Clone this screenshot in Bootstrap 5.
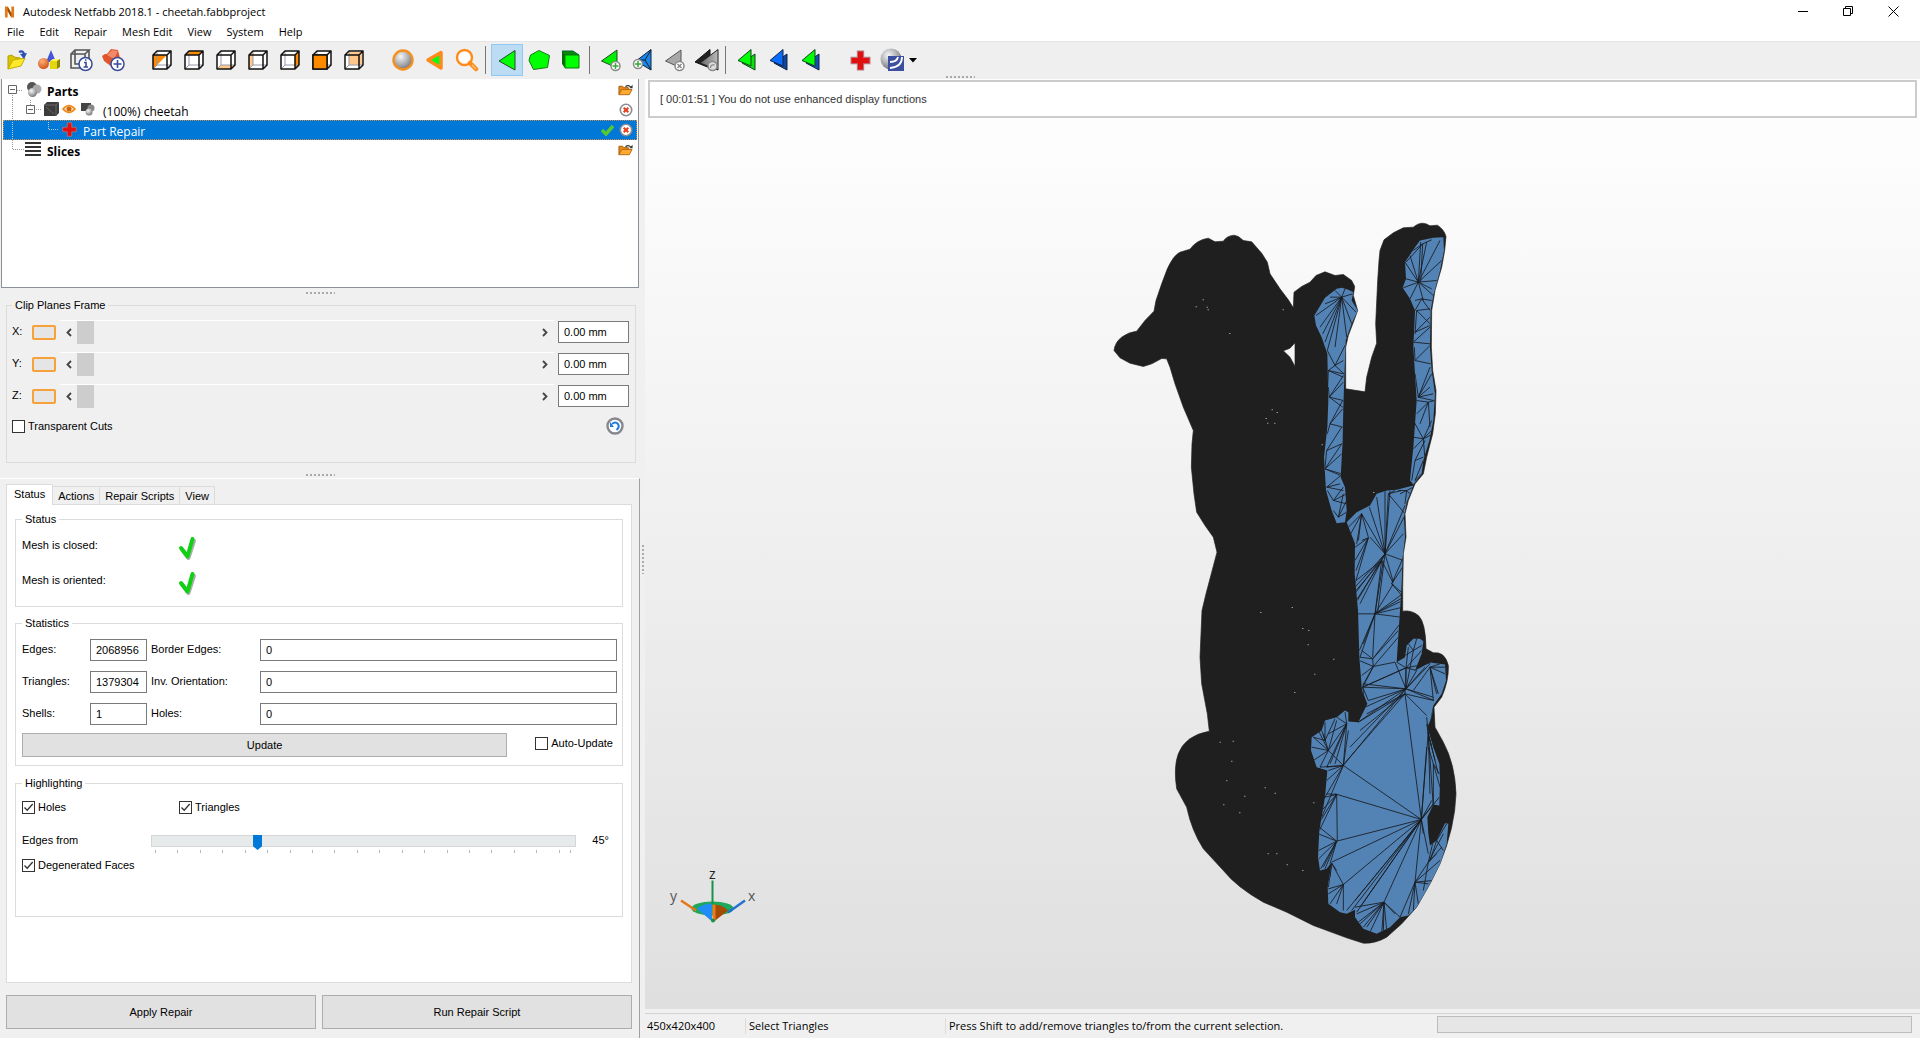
<!DOCTYPE html>
<html lang="en">
<head>
<meta charset="utf-8">
<meta name="viewport" content="width=device-width, initial-scale=1">
<title>Autodesk Netfabb 2018.1 - cheetah.fabbproject</title>
<link href="https://cdn.jsdelivr.net/npm/bootstrap@5.3.0/dist/css/bootstrap.min.css" rel="stylesheet">
<style>
  :root { --face: #f0f0f0; --line: #dcdcdc; --ui: "Open Sans", "Noto Sans", sans-serif; --form: "Liberation Sans", Arial, sans-serif; }
  body { background: var(--face); color: #000; font: 11px/16px var(--ui); min-width: 1200px; }
  button, input { font: inherit; color: inherit; border-radius: 0; }
  svg { display: block; }
  .title-bar { height: 23px; }
  .win-btn { width: 45px; height: 22px; background: none; border: 0; padding: 0; }
  .menu-bar { height: 18px; padding-left: 7px; gap: 15px; }
  .menu-bar a { color: #000; text-decoration: none; }
  .tool-bar { height: 38px; background: #efefef; border-top: 1px solid #e6e6e6; padding: 2px 0 3px 1px; }
  .tool { width: 32px; height: 32px; padding: 0; border: 1px solid transparent; background: none; }
  .tool.active { background: #bcdcf4; border-color: #90c8f6; }
  .tool-caret { width: 10px; height: 32px; padding: 0; border: 0; background: none; }
  .tool-sep { width: 1px; height: 28px; background: #777; margin: 0 5px 0 2px; }
  .gap-l { margin-left: 17px; }
  .side { padding-right: 0; }
  .tree { height: 209px; border: 1px solid #8a8f98; border-top: 0; margin: 0 1px; padding: 1px 1px 0; font-size: 12px; }
  .tree-row { height: 20px; padding-right: 4px; }
  .tree-row.sel { background: #0078d7; color: #fff; outline: 1px dotted #c98b4f; outline-offset: -1px; }
  .tree-text { padding-top: 3px; }
  .grip { height: 10px; }
  .grip-low { height: 15px; padding-bottom: 1px; }
  .form-area { font: 11px/14px var(--form); }
  fieldset { border: 1px solid var(--line); }
  fieldset > legend { float: none; width: auto; margin: 0; padding: 0 3px; font-size: 11px; line-height: 14px; }
  .clip-box { margin: 0 4px 0 6px; height: 165px; padding: 4px 6px 0 5px; }
  .clip-row { height: 32px; }
  .clip-row label { width: 20px; padding-bottom: 2px; }
  .swatch-btn { width: 24px; height: 15px; border: 2px solid #f7a13a; border-radius: 2px; background: #e5e5e5; padding: 0; }
  .scroll-arrow { width: 17px; height: 24px; border: 0; background: none; padding: 0; }
  .scroll-strip { border-top: 1px solid #fff; margin: 0 4px; height: 25px; }
  .field { height: 22px; border: 1px solid #7a7a7a; background: #fff; padding: 0 5px; min-width: 0; }
  .field-mm { width: 71px; }
  .field-num { width: 57px; }
  input[type=range] { appearance: none; -webkit-appearance: none; background: transparent; margin: 0; display: block; min-width: 0; }
  .scroll-range { height: 23px; }
  .scroll-range::-webkit-slider-thumb { -webkit-appearance: none; width: 17px; height: 23px; background: #cdcdcd; }
  .edge-range { height: 16px; width: 100%; }
  .edge-range::-webkit-slider-runnable-track { height: 12px; background: #e7eaea; border: 1px solid #d6d6d6; }
  .edge-range::-webkit-slider-thumb { -webkit-appearance: none; width: 9px; height: 15px; margin-top: -1px; background: #0078d7; clip-path: polygon(0 0,100% 0,100% 75%,50% 100%,0 75%); }
  .tick-box { appearance: none; -webkit-appearance: none; width: 13px; height: 13px; border: 1px solid #333; background: #fff; margin: 0; flex: none; }
  .tick-box:checked { background: #fff url("data:image/svg+xml,%3Csvg xmlns='http://www.w3.org/2000/svg' viewBox='0 0 11 11'%3E%3Cpath d='M1.5 5.5 4.2 8.3 9.7 2' fill='none' stroke='%23333' stroke-width='1.3'/%3E%3C/svg%3E"); }
  .tick-box + label { padding-left: 3px; }
  .lower { border-top: 1px solid #fff; border-right: 1px solid #a0a0a0; padding: 5px 7px 9px 6px; }
  .tabs { height: 20px; padding-left: 0; align-items: flex-end; }
  .tabs button { height: 18px; padding: 0 5px; border: 1px solid var(--line); border-left: 0; border-bottom: 0; background: var(--face); }
  .tabs button.active { height: 21px; padding: 0 7px 3px; border-left: 1px solid var(--line); background: #fff; margin-bottom: -1px; position: relative; }
  .tab-page { background: #fff; border: 1px solid var(--line); padding: 7px 8px; }
  .status-set { height: 95px; padding: 2px 6px; }
  .status-row { height: 35px; }
  .status-row span { width: 156px; padding-bottom: 2px; }
  .status-row svg { margin-top: 4px; }
  .stat-set { height: 150px; padding: 4px 5px 0 6px; margin-top: 9px; }
  .stat-row { height: 32px; }
  .stat-row label { padding-bottom: 3px; }
  .lab-a { width: 68px; }
  .lab-b { width: 113px; padding-left: 4px; }
  .push { background: #e1e1e1; border: 1px solid #adadad; }
  .update-row { padding-top: 3px; }
  .auto-box { margin-left: 28px; padding-bottom: 4px; }
  .push-update { height: 24px; }
  .high-set { height: 141px; padding: 10px 5px 0 6px; margin-top: 10px; }
  .high-left { width: 157px; }
  .lab-c { width: 130px; }
  .edge-row { padding-top: 19px; }
  .ticks { height: 4px; margin: 1px 4px 0; }
  .push-big { height: 34px; }
  .big-row { padding-top: 12px; gap: 6px; }
  .split { width: 5px; }
  .view { background: linear-gradient(#fff, #dfdfdf); min-height: 0; }
  .msg { height: 38px; margin: 1px 3px 0; border: 2px solid #ccc; background: #fff; padding: 0 10px; font: 11px/14px var(--form); color: #333; }
  .canvas { min-height: 0; }
  .status-bar { height: 25px; border-top: 1px solid #d4d4d4; }
  .status-bar .cell { border-left: 1px solid #dcdcdc; padding-left: 3px; }
  .cell-size { width: 100px; padding-left: 2px; }
  .cell-mode { width: 200px; }
  .work { height: 17px; width: 475px; border: 1px solid #bcbcbc; background: #e6e6e6; margin-bottom: 3px; }
</style>
</head>
<body class="d-flex flex-column vh-100 overflow-hidden">

<svg width="0" height="0" class="position-absolute" aria-hidden="true">
  <defs>
    <symbol id="cube" viewBox="0 0 20 20"><g fill="none"><path d="M5 1V15H19M5 15 1 19" stroke="#99a" stroke-width="1"/><path d="M1 5H15V19H1ZM1 5 5 1H19V15L15 19M15 5 19 1" stroke="#111" stroke-width="1.5" stroke-linejoin="round"/></g></symbol>
    <symbol id="folder" viewBox="0 0 16 12"><path d="M1 11V2h4l1 1.500h5V6" fill="#e78a1c" stroke="#a45a08"/><path d="M1 11 4 5.500h11L12 11Z" fill="#ffab32" stroke="#b5660d"/><path d="M8 2.500q3-2.500 5.500.500" fill="none" stroke="#333" stroke-width="1.300"/><path d="M12 4h3.500V.5Z" fill="#333"/></symbol>
    <symbol id="del" viewBox="0 0 14 14"><circle cx="7" cy="7" r="5.700" fill="#fff" stroke="#8b8b94" stroke-width="1.600"/><path d="m4.700 4.700 4.600 4.600m0-4.600-4.600 4.600" stroke="#e2401c" stroke-width="2"/></symbol>
    <symbol id="tick" viewBox="0 0 20 26"><path d="M4.500 15 10.500 23 16 6" fill="none" stroke="#777" stroke-opacity=".6" stroke-width="4" stroke-linejoin="round" stroke-linecap="round"/><path d="M3 13 9.500 21.500 14.500 4" fill="none" stroke="#0fd012" stroke-width="4" stroke-linecap="round" stroke-linejoin="round"/></symbol>
    <symbol id="cross" viewBox="0 0 20 20"><path d="M7 1h6v6h6v6h-6v6H7v-6H1V7h6Z" fill="#e01010" stroke="#b9757a" stroke-width="1"/></symbol>
    <symbol id="dots" viewBox="0 0 30 4"><path d="M1 2h29" stroke="#aaa" stroke-width="2" stroke-dasharray="2 2"/></symbol>
    <radialGradient id="ball" cx=".38" cy=".32" r=".75"><stop offset="0" stop-color="#f6f6f6"/><stop offset=".6" stop-color="#a4a6aa"/><stop offset="1" stop-color="#66686c"/></radialGradient>
    <radialGradient id="oball" cx=".38" cy=".3" r=".8"><stop offset="0" stop-color="#ffb27a"/><stop offset="1" stop-color="#c9480c"/></radialGradient>
    <linearGradient id="gside" x2="1"><stop offset="0" stop-color="#666"/><stop offset="1" stop-color="#bbb"/></linearGradient>
  </defs>
</svg>

<header class="bg-white">
  <div class="title-bar d-flex align-items-center">
    <svg class="ms-1 me-2" width="11" height="14" viewBox="0 0 12 14"><path d="M1 13V1h3l4 7V1h3v12H8L4 6v7Z" fill="#e07b1c"/><path d="m4 1 4 7v5L4 6Z" fill="#9c4a0b"/></svg>
    <span class="flex-grow-1">Autodesk Netfabb 2018.1 - cheetah.fabbproject</span>
    <button class="win-btn" aria-label="Minimize"><svg class="mx-auto" width="11" height="11"><path d="M0 5.500h10" stroke="#000"/></svg></button>
    <button class="win-btn" aria-label="Restore"><svg class="mx-auto" width="11" height="11"><path d="M.5 2.500h7v7h-7ZM2.500 2.500v-2h7v7h-2" fill="none" stroke="#000"/></svg></button>
    <button class="win-btn me-1" aria-label="Close"><svg class="mx-auto" width="11" height="11"><path d="m.5.5 10 10m0-10-10 10" stroke="#000"/></svg></button>
  </div>
  <nav class="menu-bar d-flex align-items-center">
    <a href="#">File</a><a href="#">Edit</a><a href="#">Repair</a><a href="#">Mesh Edit</a><a href="#">View</a><a href="#">System</a><a href="#">Help</a>
  </nav>
</header>

<div class="tool-bar d-flex align-items-center position-relative" role="toolbar">
  <button class="tool" aria-label="Open"><svg class="mx-auto" width="22" height="22" viewBox="0 0 22 22"><path d="M2 20V7l4-1 2 2 6 1v3" fill="#d9c400" stroke="#b59f00"/><path d="m2 20 5-9 12-2-4 8Z" fill="#ffe92e" stroke="#c4ad00"/><path d="M13 3q4-2 5 2" fill="none" stroke="#2b50b5" stroke-width="2.400"/><path d="m14 5 7-1-3 6Z" fill="#2b50b5"/></svg></button>
  <button class="tool" aria-label="Add part"><svg class="mx-auto" width="24" height="22" viewBox="0 0 24 22"><path d="m14 1 5 12H9Z" fill="#4456d8"/><circle cx="6.500" cy="14.500" r="5.500" fill="url(#oball)"/><path d="M13 12h7v8h-7Z" fill="#e3d60a"/><path d="m13 12 3-2h7l-3 2Z" fill="#fff45c"/><path d="m20 12 3-2v8l-3 2Z" fill="#8d8400"/></svg></button>
  <button class="tool" aria-label="Part info"><svg class="mx-auto" width="24" height="24" viewBox="0 0 24 24"><path d="M2 6 6 2h14l-4 4v14H2ZM2 6h14M6 2v14h10M20 2v9" fill="none" stroke="#555" stroke-width="1.600"/><circle cx="16.500" cy="16" r="6.500" fill="#fff" stroke="#3a4c98" stroke-width="1.500"/><path d="M15 14.500h2V19m-2.500 0H19M16 12h1.500" fill="none" stroke="#3a4c98" stroke-width="1.600"/></svg></button>
  <button class="tool" aria-label="Add analysis"><svg class="mx-auto" width="24" height="24" viewBox="0 0 24 24"><path d="M1 8 4 6l2 0 4-5 7 1 2 8-8 9-8-6Z" fill="#e0552b"/><path d="m6 7 5-5 6 1-4 8Z" fill="#f2896a"/><circle cx="16.500" cy="16" r="6.500" fill="#fff" stroke="#3a4c98" stroke-width="1.500"/><path d="M16.500 12v8m-4-4h8" stroke="#3a4c98" stroke-width="1.600"/></svg></button>

  <button class="tool gap-l" aria-label="Isometric view"><svg class="mx-auto" width="20" height="20" viewBox="0 0 20 20"><path d="M1 5 5 1H19V15L15 19H1Z" fill="#fff"/><path d="M1 5H15L1 19Z" fill="#ff8a00"/><use href="#cube"/></svg></button>
  <button class="tool" aria-label="Top view"><svg class="mx-auto" width="20" height="20" viewBox="0 0 20 20"><path d="M1 5 5 1H19V15L15 19H1Z" fill="#fff"/><path d="M1 5 5 1H19L15 5Z" fill="#ff8a00"/><use href="#cube"/></svg></button>
  <button class="tool" aria-label="Bottom view"><svg class="mx-auto" width="20" height="20" viewBox="0 0 20 20"><path d="M1 5 5 1H19V15L15 19H1Z" fill="#fff"/><path d="M1 19 5 15H19L15 19Z" fill="#ffc78a"/><use href="#cube"/></svg></button>
  <button class="tool" aria-label="Left view"><svg class="mx-auto" width="20" height="20" viewBox="0 0 20 20"><path d="M1 5 5 1H19V15L15 19H1Z" fill="#fff"/><path d="M1 5 5 1V15L1 19Z" fill="#ffc78a"/><use href="#cube"/></svg></button>
  <button class="tool" aria-label="Right view"><svg class="mx-auto" width="20" height="20" viewBox="0 0 20 20"><path d="M1 5 5 1H19V15L15 19H1Z" fill="#fff"/><path d="M15 5 19 1V15L15 19Z" fill="#ff8a00"/><use href="#cube"/></svg></button>
  <button class="tool" aria-label="Front view"><svg class="mx-auto" width="20" height="20" viewBox="0 0 20 20"><path d="M1 5 5 1H19V15L15 19H1Z" fill="#fff"/><use href="#cube"/><path d="M1 5H15V19H1Z" fill="#ff8a00" stroke="#111" stroke-width="1.500"/></svg></button>
  <button class="tool" aria-label="Back view"><svg class="mx-auto" width="20" height="20" viewBox="0 0 20 20"><path d="M1 5 5 1H19V15L15 19H1Z" fill="#fff"/><path d="M5 2H18V15H5Z" fill="#ffc78a"/><use href="#cube"/></svg></button>

  <button class="tool gap-l" aria-label="Show part"><svg class="mx-auto" width="24" height="24"><circle cx="12" cy="12" r="9.500" fill="url(#ball)" stroke="#f5901e" stroke-width="2.400"/></svg></button>
  <button class="tool" aria-label="Zoom to selection"><svg class="mx-auto" width="22" height="22"><path d="M4 11 17 3.500v15.500Z" fill="#0f1" stroke="#ff8a1c" stroke-width="3.500" stroke-linejoin="round"/></svg></button>
  <button class="tool" aria-label="Zoom"><svg class="mx-auto" width="24" height="24"><circle cx="9.500" cy="9.500" r="7.500" fill="#fff" stroke="#ff8c1a" stroke-width="2.400"/><path d="m15 15 6 6" stroke="#ff8c1a" stroke-width="4.500" stroke-linecap="round"/><path d="m17 17 4 4" stroke="#ffc27d" stroke-width="1.500"/></svg></button>
  <span class="tool-sep"></span>
  <button class="tool active" aria-label="Select triangles"><svg class="mx-auto" width="20" height="22"><path d="M2 12 18 1.500V21Z" fill="#0f0" stroke="#264a26"/></svg></button>
  <button class="tool" aria-label="Select surface"><svg class="mx-auto" width="22" height="22"><path d="M11 1.500 21.500 6.500 19.500 18.500 5.500 20.500 1 11.500 2.500 6Z" fill="#0f0" stroke="#1a7a1a"/></svg></button>
  <button class="tool" aria-label="Select shell"><svg class="mx-auto" width="20" height="22"><path d="m1 2 11 0 6 4H4Z" fill="#0a8a0a" stroke="#063"/><path d="M1 2v13l3 4V6Z" fill="#0a6a0a"/><path d="M4 6h14v13H4Z" fill="#0f0" stroke="#087a08"/></svg></button>
  <span class="tool-sep"></span>
  <button class="tool" aria-label="Add triangle"><svg class="mx-auto" width="22" height="24"><path d="M1.500 13 17 2v18Z" fill="#0e0" stroke="#264a26"/><circle cx="15.500" cy="18" r="4.500" fill="#fff" stroke="#888" stroke-width="1.500"/><path d="M15.500 15v6m-3-3h6" stroke="#3a3" stroke-width="1.500"/></svg></button>
  <button class="tool" aria-label="Add node"><svg class="mx-auto" width="22" height="24"><path d="M4 13 19 1.500V22Z" fill="#1b86e8" stroke="#123"/><path d="m13 12 6-10M13 12l6 10M13 12H4" stroke="#123"/><circle cx="6" cy="16" r="4.500" fill="#fff" stroke="#888" stroke-width="1.500"/><path d="M6 13v6m-3-3h6" stroke="#3a3" stroke-width="1.500"/></svg></button>
  <button class="tool" aria-label="Remove triangles"><svg class="mx-auto" width="22" height="24"><path d="M1.500 13 17 2v18Z" fill="#a8a8a8" stroke="#555"/><circle cx="15.500" cy="18" r="4.500" fill="#fff" stroke="#888" stroke-width="1.500"/><path d="m13.500 16 4 4m0-4-4 4" stroke="#888" stroke-width="1.500"/></svg></button>
  <button class="tool" aria-label="Invert selection"><svg class="mx-auto" width="26" height="24"><path d="M1 14 16 1.500V20Z" fill="#222" stroke="#111"/><path d="M6 15 24 1.500V22Z" fill="url(#gside)" stroke="#222"/><circle cx="18.500" cy="18" r="4.500" fill="#ddd" stroke="#888" stroke-width="1.500"/><path d="M16.500 20q0-4 4-3" fill="none" stroke="#888" stroke-width="1.300"/></svg></button>
  <span class="tool-sep"></span>
  <button class="tool" aria-label="Flip selected"><svg class="mx-auto" width="20" height="24"><path d="m5 15 13-9v16Z" fill="#0ae00a" stroke="#142"/><path d="M1 12.500 14 1.500V18Z" fill="#0f0" stroke="#142"/></svg></button>
  <button class="tool" aria-label="Flip all"><svg class="mx-auto" width="20" height="24"><path d="m5 15 13-9v16Z" fill="#12459c" stroke="#124"/><path d="M1 12.500 14 1.500V18Z" fill="#0a6cff" stroke="#124"/></svg></button>
  <button class="tool" aria-label="Make oriented"><svg class="mx-auto" width="20" height="24"><path d="m5 15 13-9v16Z" fill="#1450b8" stroke="#124"/><path d="M1 12.500 14 1.500V18Z" fill="#0f0" stroke="#142"/></svg></button>

  <button class="tool gap-l" aria-label="Automatic repair"><svg class="mx-auto" width="21" height="21"><use href="#cross"/></svg></button>
  <button class="tool" aria-label="Display mode"><svg class="mx-auto" width="24" height="24"><circle cx="11" cy="11" r="10.500" fill="url(#ball)"/><path d="M8 8h16v15H8Z" fill="#3c4fa0"/><path d="M10 14q7 0 8-5M10 20q12-1 12-11" fill="none" stroke="#fff" stroke-width="1.800"/></svg></button>
  <button class="tool-caret" aria-label="Display mode list"><svg class="mx-auto" width="8" height="5"><path d="M0 0h8L4 4.500Z"/></svg></button>
  <svg class="position-absolute bottom-0 start-50 translate-middle-x" width="30" height="4"><use href="#dots"/></svg>
</div>

<main class="d-flex flex-grow-1" style="min-height:0">
  <aside class="side col-4 d-flex flex-column">
    <div class="tree bg-white">
      <div class="tree-row d-flex align-items-center">
        <svg width="44" height="20"><path d="M9.500 15v5M14 10.500h6" stroke="#999" stroke-dasharray="1 1"/><path d="M5.500 5.500h8v8h-8ZM7 9.500h5" fill="#fff" stroke="#666"/><circle cx="29" cy="7" r="5" fill="#555"/><circle cx="34" cy="9" r="4.500" fill="#aaa"/><circle cx="29.500" cy="12.500" r="4.500" fill="url(#ball)"/></svg>
        <b class="tree-text flex-grow-1">Parts</b><svg width="15" height="12"><use href="#folder"/></svg>
      </div>
      <div class="tree-row d-flex align-items-center">
        <svg width="100" height="20"><path d="M9.500 0v20M27.500 0v5M33 9.500h5" stroke="#999" stroke-dasharray="1 1"/><path d="M23.500 5.500h8v8h-8ZM25 9.500h5" fill="#fff" stroke="#666"/><path d="m41 5 3-3h12v11l-3 3H41Z" fill="#3c3c3c"/><path d="M41 5h12v11M53 5l3-3M43 7l8 7" fill="none" stroke="#666"/><path d="M60 9q6-7 12 0-6 7-12 0Z" fill="#ffd9b0" stroke="#f08a1c" stroke-width="1.600"/><circle cx="66" cy="9" r="2.500" fill="#c96a10"/><path d="M78 3h10v8H78Z" fill="#444"/><circle cx="88" cy="8" r="3.500" fill="#888"/><circle cx="86" cy="12" r="3.500" fill="url(#ball)"/></svg>
        <span class="tree-text flex-grow-1">(100%) cheetah</span><svg width="14" height="14"><use href="#del"/></svg>
      </div>
      <div class="tree-row sel d-flex align-items-center">
        <svg width="80" height="20"><path d="M9.500 0v20" stroke="#bcd" stroke-dasharray="1 1"/><path d="M45.500 0v9.500h10" fill="none" stroke="#bcd" stroke-dasharray="1 1"/><svg x="59" y="2" width="15" height="15"><use href="#cross"/></svg></svg>
        <span class="tree-text flex-grow-1">Part Repair</span>
        <svg class="me-1" width="15" height="12"><path d="m2 6 4 4 7-8" fill="none" stroke="#58c832" stroke-width="3.500"/></svg><svg width="14" height="14"><use href="#del"/></svg>
      </div>
      <div class="tree-row d-flex align-items-center">
        <svg width="44" height="20"><path d="M9.500 0v9.500H21" fill="none" stroke="#999" stroke-dasharray="1 1"/><path d="M22 3h16M22 7h16M22 11h16M22 15h16" stroke="#333" stroke-width="2"/></svg>
        <b class="tree-text flex-grow-1">Slices</b><svg width="15" height="12"><use href="#folder"/></svg>
      </div>
    </div>
    <div class="grip d-flex justify-content-center align-items-center"><svg width="30" height="4"><use href="#dots"/></svg></div>

    <div class="form-area d-flex flex-column flex-grow-1">
      <fieldset class="clip-box">
        <legend>Clip Planes Frame</legend>
        <div class="clip-row d-flex align-items-center">
          <label for="cx">X:</label><button class="swatch-btn" aria-label="X plane"></button>
          <div class="scroll-strip d-flex flex-grow-1"><button class="scroll-arrow" aria-label="X down"><svg class="mx-auto" width="6" height="9"><path d="M5 1 1.500 4.500 5 8" fill="none" stroke="#444" stroke-width="1.800"/></svg></button><input class="scroll-range flex-grow-1" type="range" value="0" aria-label="X position"><button class="scroll-arrow" aria-label="X up"><svg class="mx-auto" width="6" height="9"><path d="m1 1 3.500 3.500L1 8" fill="none" stroke="#444" stroke-width="1.800"/></svg></button></div>
          <input id="cx" class="field field-mm" value="0.00 mm">
        </div>
        <div class="clip-row d-flex align-items-center">
          <label for="cy">Y:</label><button class="swatch-btn" aria-label="Y plane"></button>
          <div class="scroll-strip d-flex flex-grow-1"><button class="scroll-arrow" aria-label="Y down"><svg class="mx-auto" width="6" height="9"><path d="M5 1 1.500 4.500 5 8" fill="none" stroke="#444" stroke-width="1.800"/></svg></button><input class="scroll-range flex-grow-1" type="range" value="0" aria-label="Y position"><button class="scroll-arrow" aria-label="Y up"><svg class="mx-auto" width="6" height="9"><path d="m1 1 3.500 3.500L1 8" fill="none" stroke="#444" stroke-width="1.800"/></svg></button></div>
          <input id="cy" class="field field-mm" value="0.00 mm">
        </div>
        <div class="clip-row d-flex align-items-center">
          <label for="cz">Z:</label><button class="swatch-btn" aria-label="Z plane"></button>
          <div class="scroll-strip d-flex flex-grow-1"><button class="scroll-arrow" aria-label="Z down"><svg class="mx-auto" width="6" height="9"><path d="M5 1 1.500 4.500 5 8" fill="none" stroke="#444" stroke-width="1.800"/></svg></button><input class="scroll-range flex-grow-1" type="range" value="0" aria-label="Z position"><button class="scroll-arrow" aria-label="Z up"><svg class="mx-auto" width="6" height="9"><path d="m1 1 3.500 3.500L1 8" fill="none" stroke="#444" stroke-width="1.800"/></svg></button></div>
          <input id="cz" class="field field-mm" value="0.00 mm">
        </div>
        <div class="d-flex justify-content-between align-items-center pt-1 pe-1">
          <div class="d-flex align-items-center"><input class="tick-box" type="checkbox" id="tc"><label for="tc">Transparent Cuts</label></div>
          <button class="border-0 bg-transparent p-0" aria-label="Reset planes"><svg width="20" height="20"><circle cx="10" cy="10" r="7.500" fill="#fff" stroke="#85868e" stroke-width="2.400"/><path d="M7 8q3.500-3 6 0 2 3-1.500 6" fill="none" stroke="#1e7be0" stroke-width="2"/><path d="M5 6v5h4Z" fill="#1e7be0"/></svg></button>
        </div>
      </fieldset>
      <div class="grip-low d-flex justify-content-center align-items-end"><svg width="30" height="4"><use href="#dots"/></svg></div>

      <section class="lower d-flex flex-column flex-grow-1">
        <div class="tabs d-flex" role="tablist">
          <button class="active" role="tab">Status</button><button role="tab">Actions</button><button role="tab">Repair Scripts</button><button role="tab">View</button>
        </div>
        <div class="tab-page flex-grow-1">
          <fieldset class="status-set">
            <legend>Status</legend>
            <div class="status-row d-flex align-items-center"><span>Mesh is closed:</span><svg width="20" height="26"><use href="#tick"/></svg></div>
            <div class="status-row d-flex align-items-center"><span>Mesh is oriented:</span><svg width="20" height="26"><use href="#tick"/></svg></div>
          </fieldset>
          <fieldset class="stat-set">
            <legend>Statistics</legend>
            <div class="stat-row d-flex align-items-center"><label class="lab-a" for="e1">Edges:</label><input id="e1" class="field field-num" value="2068956"><label class="lab-b" for="e2">Border Edges:</label><input id="e2" class="field flex-grow-1" value="0"></div>
            <div class="stat-row d-flex align-items-center"><label class="lab-a" for="t1">Triangles:</label><input id="t1" class="field field-num" value="1379304"><label class="lab-b" for="t2">Inv. Orientation:</label><input id="t2" class="field flex-grow-1" value="0"></div>
            <div class="stat-row d-flex align-items-center"><label class="lab-a" for="s1">Shells:</label><input id="s1" class="field field-num" value="1"><label class="lab-b" for="s2">Holes:</label><input id="s2" class="field flex-grow-1" value="0"></div>
            <div class="update-row d-flex align-items-center"><button class="push push-update flex-grow-1">Update</button><div class="auto-box d-flex align-items-center"><input class="tick-box" type="checkbox" id="au"><label for="au" class="pe-1">Auto-Update</label></div></div>
          </fieldset>
          <fieldset class="high-set">
            <legend>Highlighting</legend>
            <div class="d-flex"><div class="high-left d-flex align-items-center"><input class="tick-box" type="checkbox" id="hh" checked><label for="hh">Holes</label></div><div class="d-flex align-items-center"><input class="tick-box" type="checkbox" id="ht" checked><label for="ht">Triangles</label></div></div>
            <div class="edge-row d-flex"><label class="lab-c" for="er">Edges from</label>
              <div class="flex-grow-1"><input id="er" class="edge-range" type="range" min="0" max="185" value="45">
                <svg class="ticks" id="ticks" width="417" height="4"></svg></div>
              <span class="ps-3 pe-2">45°</span></div>
            <div class="d-flex align-items-center pt-1"><input class="tick-box" type="checkbox" id="df" checked><label for="df">Degenerated Faces</label></div>
          </fieldset>
        </div>
        <div class="big-row d-flex"><button class="push push-big flex-fill w-50">Apply Repair</button><button class="push push-big flex-fill w-50">Run Repair Script</button></div>
      </section>
    </div>
  </aside>

  <div class="split d-flex align-items-center"><svg width="4" height="30"><path d="M3 1v29" stroke="#aaa" stroke-width="2" stroke-dasharray="2 2"/></svg></div>

  <section class="d-flex flex-column flex-grow-1" style="min-width:0">
    <div class="view d-flex flex-column flex-grow-1">
      <div class="msg d-flex align-items-center">[ 00:01:51 ] You do not use enhanced display functions</div>
      <svg class="canvas flex-grow-1 w-100" viewBox="645 118 1275 890" preserveAspectRatio="xMidYMid meet" font-family="Open Sans, sans-serif" font-size="14">
        <defs><clipPath id="skin"><path id="b1" d="M703 345 735 292 770 265 785 262 805 268 820 275 815 300 833 330 815 370 797 420 793 530 790 620 788 720 782 830 795 860 800 930 795 965 770 968 755 930 738 870 732 770 742 680 745 600 742 460 725 410 708 375ZM975 185 1005 140 1020 120 1060 112 1090 110 1092 150 1080 210 1060 285 1052 330 1050 440 1055 510 1065 580 1060 660 1048 720 1030 780 1025 820 1000 852 990 840 1000 740 1010 600 1005 520 1000 440 1005 330 990 295 968 262 978 235ZM800 965 830 935 870 915 890 880 920 870 950 868 1000 855 980 905 972 950 975 1010 968 1070 965 1150 962 1200 958 1260 950 1385 975 1370 980 1335 1000 1315 1020 1315 1030 1322 1025 1360 1005 1410 1050 1386 1095 1392 1098 1440 1085 1480 1060 1515 1055 1550 1042 1580 1060 1640 1078 1690 1080 1740 1078 1815 1060 1812 1042 1850 1045 1900 1050 1935 1070 1920 1095 1868 1105 1870 1100 1930 1080 1990 1050 2050 1010 2120 985 2145 960 2150 930 2180 890 2200 850 2185 825 2150 825 2128 800 2140 780 2135 745 2110 743 2060 755 1985 740 2005 720 2010 714 1970 718 1890 735 1790 742 1710 710 1700 693 1650 695 1610 725 1590 735 1560 770 1550 795 1530 805 1535 805 1563 835 1565 862 1510 846 1470 838 1370 834 1230 824 1120 825 1030Z"/></clipPath></defs>
        <g transform="translate(1080 200) scale(.33333)">
          <path fill="#1f1f1f" stroke="#1f1f1f" stroke-width="2" stroke-linejoin="round" fill-rule="evenodd" d="M102 450Q105 425 125 410 145 395 170 392L195 360 222 332 228 300 245 250 262 205Q280 165 300 155L330 146Q350 118 385 113L405 124 430 122Q440 106 462 104L475 108 490 120 515 124 545 158 562 185 570 220 600 265 625 298 640 322 642 275 665 258 690 245 708 225 735 214 765 225 790 222 815 240 824 258 820 285 833 330 822 360 805 405 797 440 797 565 855 574 860 530 875 470 890 428 887 370 893 240 897 180 900 150 912 118 940 97 970 82 1000 80Q1025 58 1050 76L1072 74Q1092 86 1098 108L1094 150 1085 200 1065 270 1055 330 1054 440 1058 510 1068 570 1066 640 1058 700 1040 770 1030 820 1005 850 985 900 975 940 978 1010 970 1060 968 1160 968 1232Q995 1228 1015 1245 1037 1265 1038 1345L1060 1357Q1095 1352 1105 1395 1107 1440 1085 1490L1062 1520 1065 1580 1090 1625Q1125 1690 1128 1780 1125 1880 1080 1990L1050 2050 1010 2120 965 2170 920 2210Q885 2230 850 2228L800 2212 700 2175 620 2135 550 2105Q470 2060 430 2010L370 1945Q335 1890 320 1820L290 1765Q280 1700 295 1660 315 1605 388 1592L382 1540 365 1450 360 1370 366 1230 378 1180 411 1055 400 1010 375 975 350 935 342 880 334 800 336 730 340 690 310 620 285 550 270 500 260 475 245 474 215 490 190 498 150 488 120 472ZM645 427 630 443 610 451 630 470 645 498Z"/>
          <use href="#b1" fill="#5383b5"/>
          <g clip-path="url(#skin)"><path id="mesh" fill="none" stroke="#1a1c20" stroke-width="2.600"/></g>
          <path id="specks" stroke="#cfd2d4" stroke-width="3"/>
        </g>
        <g fill="#555"><ellipse cx="712.500" cy="908" rx="21" ry="7" fill="#1fa75a"/><path d="M697 908Q704 903 712 903V921Z" fill="#1f8df5"/><path d="M714 904Q722 904 728 910L714 921Z" fill="#a34a05"/><path d="M714 904v16" stroke="#f07a1a" stroke-width="3"/><path d="M712.500 880v24" stroke="#159447" stroke-width="2"/><path d="m681 900 15 10" stroke="#e5761a" stroke-width="2.400"/><path d="m745 900-17 12" stroke="#2170d2" stroke-width="2.400"/><circle cx="713" cy="920" r="2" fill="#159447"/>
          <text x="709" y="879" fill="#222">z</text><text x="670" y="901">y</text><text x="748" y="901">x</text></g>
      </svg>
    </div>
    <div class="pt-1"><div class="status-bar d-flex align-items-center">
      <div class="cell-size">450x420x400</div><div class="cell cell-mode">Select Triangles</div><div class="cell flex-grow-1">Press Shift to add/remove triangles to/from the current selection.</div><div class="work me-2" role="progressbar" aria-label="Progress"></div>
    </div></div>
  </section>
</main>

<script src="https://cdn.jsdelivr.net/npm/bootstrap@5.3.0/dist/js/bootstrap.bundle.min.js"></script>
<script>
  // Each fan: hub x, hub y, then the outer vertices joined to it.
  const fans = [
    [785,290, 708,345,720,380,728,400,735,425,742,450,750,290,765,270,795,265,818,280,800,410,815,370,828,335,765,440,735,310],
    [765,495, 742,450,795,435,745,510,792,520,790,480],[745,510, 790,520,790,530,742,580],[748,590, 790,525,790,545,790,600,788,620,745,560],
    [750,670, 788,600,788,625,788,680,742,700],[740,750, 785,680,785,730,735,800],[735,805, 785,730,785,760,784,820,782,825],[740,860, 782,825,780,850,790,870],[760,900, 790,860,800,880,742,870,800,910],[775,950, 800,900,800,935,760,930,790,880],
    [1015,245, 975,185,990,165,1022,125,1040,125,1080,120,1085,180,1070,240,970,262,978,235,990,295,1030,300,1060,285,1055,265],
    [1028,130, 978,185,1000,150,1022,245,1055,118],[1025,295, 1005,330,1050,330,1055,300,1005,300],[1010,330, 1050,325,1050,370,1005,400],[1005,395, 1050,350,1050,375],[1000,425, 1050,380,1050,430],[1005,480, 1050,435,1052,490,1003,440],[1015,590, 1050,500,1055,520,1060,580,1005,520,1050,560,1060,600],[1045,605, 1010,600,1020,670,1065,600,1050,680,1010,640],[1030,715, 1000,660,1000,710,1055,660,1055,690,1000,745,1035,780,1060,700],[1005,780, 1035,720,1030,770,995,840],[1005,840, 1030,780,1025,820],
    [915,1060, 845,940,868,920,890,890,915,870,930,870,975,915,972,950,970,1000,870,1010,940,1145,825,1160,828,1175,832,1200,840,1210,893,1235,970,1080],
    [925,880, 915,1060,945,870,975,940,965,870],[980,870, 955,870,975,910,990,880,960,880,1000,860],[845,940, 805,980,830,1030,865,1010,812,1000,835,1020],[865,1012, 825,1080,828,1110,825,1150,845,1020,825,1040],
    [905,1080, 828,1140,828,1170,832,1195,885,1240,938,1145],[935,1150, 970,1070,968,1100,970,1180,970,1190],[885,1240, 834,1240,838,1350,910,1080,940,1150,968,1180,968,1200,968,1220,962,1250,840,1370,878,1370,850,1330,970,1190],[878,1375, 838,1370,960,1270,955,1290,880,1400,845,1350],[880,1398, 845,1425,848,1455,955,1310,945,1385,838,1380],
    [978,1465, 848,1460,850,1450,945,1385,978,1400,1000,1350,1010,1410,1035,1400,1050,1390,1062,1500,1060,1490,865,1500,855,1520,835,1565,810,1640,790,1695],[978,1402, 950,1385,985,1340,1025,1350,1050,1388,1010,1410,975,1480,848,1460],[848,1460, 978,1402,880,1398,865,1500,855,1515],
    [1050,1400, 1000,1470,1060,1500,1075,1480,1095,1420,1080,1390,1070,1480,1098,1400],[1000,1350, 985,1330,1010,1315,1025,1335,975,1365],
    [975,1480, 1024,1857,1040,1545,1060,1500,835,1565,840,1590,792,1690,860,1540],
    [1024,1857, 790,1695,765,1780,770,1922,755,1985,790,2052,800,2130,815,2130,825,2100,830,2135,840,2120,912,2105,1045,1590,1040,1640,1055,1800,1060,1810,1045,1960,1005,2045,1078,1790,1030,1900],
    [790,1695, 745,1710,740,1740,735,1790,725,1850,745,1650,800,1570,805,1590,720,1700,740,1700],[770,1782, 772,1922,735,1790,725,1830,718,1890,740,1780,722,1860],[770,1922, 715,1900,716,1950,716,1975,722,2005,735,2005,750,1990,718,1880,730,2000],[755,1988, 790,2052,750,2030,745,2060,770,2010],[790,2052, 745,2080,750,2110,770,2110,790,2130,745,2065],
    [745,1650, 700,1610,695,1640,700,1680,720,1700,800,1570,730,1600,715,1590,770,1560],[735,1620, 700,1610,735,1565,765,1555,725,1590],[800,1570, 770,1550,795,1535,740,1700,750,1690,765,1690,745,1600],
    [912,2105, 830,2140,835,2165,850,2180,870,2195,905,2200,910,2200,920,2190,945,2140,825,2120,960,2150,840,2170,860,2180],[1005,2045, 960,2150,985,2140,1015,2110,1060,2040,1080,1980,1000,2130,1045,2050],[1045,1985, 1060,1920,1085,1940,1090,1900,1005,2045,1030,2070,1070,1960],[1070,1920, 1100,1870,1050,1980,1090,1950],
    [1045,1600, 1040,1550,1060,1520,1065,1680,1075,1720,1050,1780,1060,1820,1040,1570,1055,1640],[1060,1690, 1078,1720,1080,1760,1060,1810,1045,1640]
  ];
  document.getElementById('mesh').setAttribute('d', fans.map(([x, y, ...p]) => {
    let d = '';
    for (let i = 0; i < p.length; i += 2) d += `M${x} ${y}L${p[i]} ${p[i + 1]}`;
    return d;
  }).join(''));
  const specks = [368,298,347,319,380,320,383,328,448,399,608,328,575,628,590,636,557,654,562,668,583,668,725,733,880,876,541,1236,635,1221,667,1284,685,1290,683,1333,760,1376,703,1421,643,1476,419,1625,458,1622,454,1682,439,1741,430,1813,493,1787,478,1837,554,1762,584,1778,700,1807,563,1960,589,1960,620,1993,667,2010];
  let s = '';
  for (let i = 0; i < specks.length; i += 2) s += `M${specks[i]} ${specks[i + 1]}h3`;
  document.getElementById('specks').setAttribute('d', s);
  // Slider ticks every 10 degrees, plus one at the upper end.
  const t = document.getElementById('ticks');
  let td = '';
  for (let a = 0; a <= 185; a += a < 180 ? 10 : 5) td += `M${Math.round(a / 185 * 415) + .5} 0v3`;
  t.innerHTML = `<path d="${td}" stroke="#b8b8b8"/>`;
</script>
</body>
</html>
